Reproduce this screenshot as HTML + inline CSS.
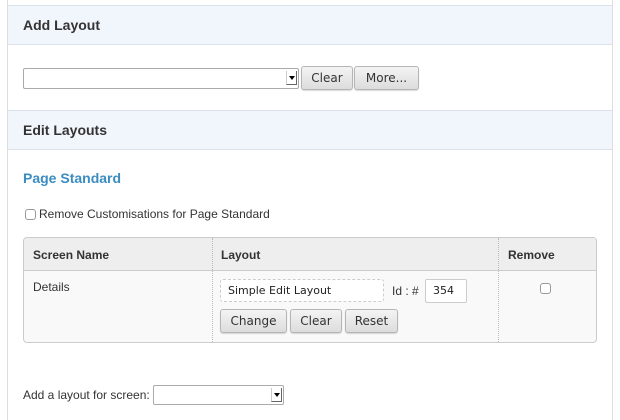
<!DOCTYPE html>
<html><head><style>
*{box-sizing:border-box;margin:0;padding:0}
body{width:620px;height:420px;background:#fff;position:relative;overflow:hidden;font-family:"Liberation Sans",sans-serif;font-size:12px;color:#333}
.a{position:absolute}
.vl{left:7px;top:0;width:1px;height:420px;background:#ddd}
.vr{left:612px;top:0;width:1px;height:420px;background:#ddd}
.hd{left:8px;width:604px;background:#f1f5fc;border-top:1px solid #dbe2ec;border-bottom:1px solid #dbe2ec;font-weight:bold;font-size:14px;color:#333;padding-left:15px}
.btn{position:absolute;height:24px;border:1px solid #b5b5b5;border-radius:3px;background:linear-gradient(#f4f4f4,#dcdcdc);font-family:"DejaVu Sans",sans-serif;font-size:12px;color:#333;text-align:center;line-height:22px;box-shadow:0 1px 1px rgba(0,0,0,.15)}
.sel{position:absolute;border:1px solid #aaa;border-radius:2px;background:#fff}
.arr{position:absolute;right:1px;top:2px;width:11px;height:14px;border-left:1px solid #ccc;border-right:1px solid #666;border-bottom:1px solid #666}
.arr:after{content:"";position:absolute;left:2px;top:5px;border-left:3px solid transparent;border-right:3px solid transparent;border-top:4px solid #000}
.cb{position:absolute;width:11px;height:11px;border:1px solid #999;border-radius:3px;background:#fff}
</style></head><body>
<div class="a vl"></div><div class="a vr"></div>
<div class="a hd" style="top:5px;height:40px;line-height:38px">Add Layout</div>
<div class="sel" style="left:23px;top:68px;width:276px;height:21px"><div class="arr"></div></div>
<div class="btn" style="left:301px;top:66px;width:52px">Clear</div>
<div class="btn" style="left:354px;top:66px;width:65px">More...</div>
<div class="a hd" style="top:110px;height:40px;line-height:38px">Edit Layouts</div>
<div class="a" style="left:23px;top:170px;font-size:14px;font-weight:bold;color:#3a8cc1">Page Standard</div>
<div class="cb" style="left:25px;top:209px"></div>
<div class="a" style="left:39px;top:207px">Remove Customisations for Page Standard</div>
<div class="a" style="left:23px;top:237px;width:574px;height:106px;border:1px solid #ccc;border-radius:4px;background:#f9f9f9;overflow:hidden">
 <div class="a" style="left:0;top:0;width:574px;height:33px;background:#eee;border-bottom:1px solid #ccc"></div>
 <div class="a" style="left:188px;top:0;height:106px;border-left:1px dotted #bbb"></div>
 <div class="a" style="left:474px;top:0;height:106px;border-left:1px dotted #bbb"></div>
 <div class="a" style="left:9px;top:10px;font-weight:bold">Screen Name</div>
 <div class="a" style="left:197px;top:10px;font-weight:bold">Layout</div>
 <div class="a" style="left:484px;top:10px;font-weight:bold">Remove</div>
 <div class="a" style="left:9px;top:42px">Details</div>
</div>
<div class="a" style="left:220px;top:279px;width:164px;height:23px;border:1px dashed #ccc;border-radius:3px;background:#fff;font-family:'DejaVu Sans',sans-serif;font-size:11px;line-height:21px;padding-left:7px;color:#222">Simple Edit Layout</div>
<div class="a" style="left:392px;top:284px">Id : #</div>
<div class="a" style="left:425px;top:279px;width:42px;height:24px;border:1px solid #ccc;border-radius:2px;background:#fff;font-family:'DejaVu Sans',sans-serif;font-size:11px;line-height:22px;padding-left:7px;color:#222">354</div>
<div class="btn" style="left:220px;top:309px;width:67px">Change</div>
<div class="btn" style="left:290px;top:309px;width:52px">Clear</div>
<div class="btn" style="left:345px;top:309px;width:53px">Reset</div>
<div class="cb" style="left:540px;top:283px"></div>
<div class="a" style="left:23px;top:388px">Add a layout for screen:</div>
<div class="sel" style="left:153px;top:385px;width:131px;height:20px"><div class="arr"></div></div>
</body></html>
